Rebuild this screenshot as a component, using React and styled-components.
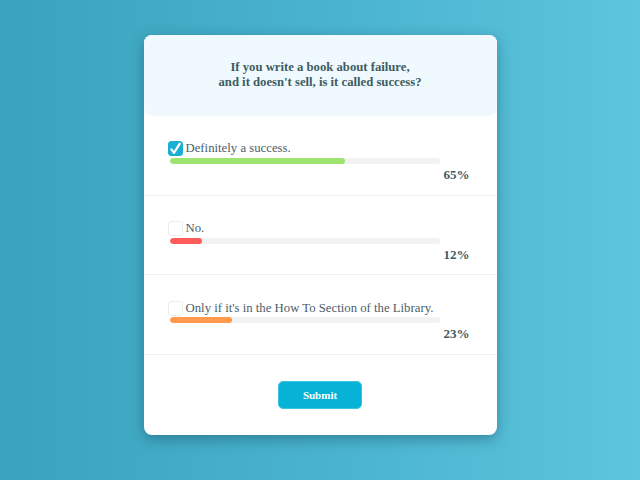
import React, { useState } from "react";
import styled, { createGlobalStyle } from "styled-components";

const Global = createGlobalStyle`
  html, body { margin: 0; padding: 0; }
  body {
    width: 640px;
    height: 480px;
    overflow: hidden;
    background: linear-gradient(90deg, #3aa2bc 0%, #4bb4cf 55%, #5dc5dd 100%);
    font-family: "Liberation Serif", "Times New Roman", serif;
  }
`;

const Page = styled.div`
  display: flex;
  justify-content: center;
  padding-top: 35px;
`;

const Card = styled.div`
  width: 353px;
  height: 400px;
  background: #ffffff;
  border-radius: 8px;
  box-shadow: 0 4px 14px rgba(20, 70, 90, 0.45);
  display: flex;
  flex-direction: column;
  box-sizing: border-box;
`;

const Header = styled.div`
  height: 81px;
  background: #f0f9fd;
  border-radius: 8px;
  display: flex;
  align-items: center;
  justify-content: center;
  text-align: center;
  font-weight: bold;
  font-size: 12.7px;
  line-height: 15px;
  color: #3d5c63;
`;

const Option = styled.div`
  height: 80px;
  box-sizing: border-box;
  padding: 25px 27px 0 24px;
  border-bottom: 1px solid #f1f1f1;
  display: flex;
  flex-direction: column;
`;

const Row = styled.label`
  display: flex;
  align-items: center;
  gap: 3px;
  height: 16px;
  font-size: 12.75px;
  color: #4b6067;
  cursor: pointer;
`;

const Box = styled.span`
  width: 15px;
  height: 15px;
  box-sizing: border-box;
  border-radius: 3px;
  border: 1px solid ${(p) => (p.$checked ? "#1ab0d5" : "#ececec")};
  background: ${(p) => (p.$checked ? "#1ab0d5" : "#ffffff")};
  display: flex;
  align-items: center;
  justify-content: center;
  flex: none;
`;

const Track = styled.div`
  margin: 1px 0 0 2px;
  width: 270px;
  height: 6px;
  border-radius: 3px;
  background: #f2f2f2;
  overflow: hidden;
`;

const Fill = styled.div`
  height: 100%;
  border-radius: 3px;
  background: ${(p) => p.$color};
`;

const Percent = styled.div`
  margin-top: 3px;
  text-align: right;
  font-weight: bold;
  font-size: 13px;
  line-height: 16px;
  color: #3d5c63;
`;

const Footer = styled.div`
  height: 80px;
  display: flex;
  align-items: center;
  justify-content: center;
`;

const Submit = styled.button`
  width: 84px;
  height: 28px;
  border-radius: 5px;
  border: 1px solid #3cc4e3;
  background: #06b3d7;
  color: #ffffff;
  font-family: "Liberation Serif", "Times New Roman", serif;
  font-weight: bold;
  font-size: 11px;
  cursor: pointer;
`;

const Check = () => (
  <svg width="13" height="13" viewBox="0 0 13 13">
    <path
      d="M2.4 7.4 L5 10.8 L10.8 1.6"
      fill="none"
      stroke="#ffffff"
      strokeWidth="2.2"
      strokeLinecap="round"
      strokeLinejoin="round"
    />
  </svg>
);

const options = [
  { label: "Definitely a success.", pct: 65, color: "#9de472" },
  { label: "No.", pct: 12, color: "#ff5c5c" },
  { label: "Only if it's in the How To Section of the Library.", pct: 23, color: "#ff9a4c" },
];

export default function App() {
  const [sel, setSel] = useState(0);
  return (
    <>
      <Global />
      <Page>
        <Card>
          <Header>
            If you write a book about failure,
            <br />
            and it doesn't sell, is it called success?
          </Header>
          {options.map((o, i) => (
            <Option key={i}>
              <Row onClick={() => setSel(i)}>
                <Box $checked={sel === i}>{sel === i && <Check />}</Box>
                {o.label}
              </Row>
              <Track>
                <Fill $color={o.color} style={{ width: `${o.pct}%` }} />
              </Track>
              <Percent>{o.pct}%</Percent>
            </Option>
          ))}
          <Footer>
            <Submit>Submit</Submit>
          </Footer>
        </Card>
      </Page>
    </>
  );
}
